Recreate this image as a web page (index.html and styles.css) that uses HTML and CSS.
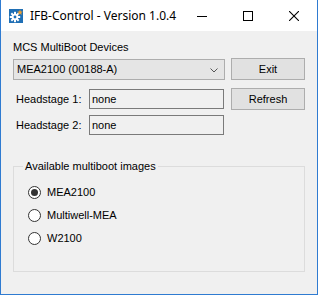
FILE: index.html
```html
<!DOCTYPE html>
<html>
<head>
<meta charset="utf-8">
<link rel="stylesheet" href="styles.css">
</head>
<body>
<div class="window">
  <div class="titlebar">
    <svg class="appicon" width="14" height="14" viewBox="0 0 14 14">
      <rect width="14" height="14" fill="#1f6fb5"/>
      <g fill="#ffffff">
        <circle cx="6" cy="8" r="3.3"/>
        <rect x="5" y="2.8" width="2" height="10.4"/>
        <rect x="0.8" y="7" width="10.4" height="2"/>
        <rect x="5" y="2.8" width="2" height="10.4" transform="rotate(45 6 8)"/>
        <rect x="5" y="2.8" width="2" height="10.4" transform="rotate(-45 6 8)"/>
      </g>
      <circle cx="6" cy="8" r="1.4" fill="#1f6fb5"/>
      <polygon points="11,0.5 11.8,2.6 13.8,2.6 12.2,3.9 12.8,6 11,4.7 9.2,6 9.8,3.9 8.2,2.6 10.2,2.6" fill="#f0a030"/>
    </svg>
    <span class="title">IFB-Control - Version 1.0.4</span>
    <div class="controls">
      <span class="ctl"><svg width="10" height="10" viewBox="0 0 10 10"><rect x="0" y="5" width="10" height="1" fill="#000"/></svg></span>
      <span class="ctl"><svg width="10" height="10" viewBox="0 0 10 10"><rect x="0.5" y="0.5" width="9" height="9" fill="none" stroke="#000" stroke-width="1"/></svg></span>
      <span class="ctl"><svg width="10" height="10" viewBox="0 0 10 10"><path d="M0 0 L10 10 M10 0 L0 10" stroke="#000" stroke-width="1.1"/></svg></span>
    </div>
  </div>
  <div class="client">
    <div class="toplabel">MCS MultiBoot Devices</div>
    <div class="row row1">
      <div class="combo">
        <span class="combo-text">MEA2100 (00188-A)</span>
        <svg class="chev" width="8" height="5" viewBox="0 0 8 5"><path d="M0.5 0.5 L4 4 L7.5 0.5" fill="none" stroke="#555" stroke-width="1"/></svg>
      </div>
      <div class="btn">Exit</div>
    </div>
    <div class="row row2">
      <span class="lbl">Headstage 1:</span>
      <div class="tbox">none</div>
      <div class="btn">Refresh</div>
    </div>
    <div class="row row3">
      <span class="lbl">Headstage 2:</span>
      <div class="tbox">none</div>
    </div>
    <fieldset class="group">
      <legend>Available multiboot images</legend>
      <div class="radio"><span class="circle checked"></span><span class="rtext">MEA2100</span></div>
      <div class="radio"><span class="circle"></span><span class="rtext">Multiwell-MEA</span></div>
      <div class="radio"><span class="circle"></span><span class="rtext">W2100</span></div>
    </fieldset>
  </div>
</div>
</body>
</html>
```
FILE: styles.css
```css
html, body {
  margin: 0;
  padding: 0;
  background: #ffffff;
}
.window {
  width: 318px;
  height: 295px;
  box-sizing: border-box;
  border-left: 1px solid #2f7bd1;
  border-right: 1px solid #2f7bd1;
  border-bottom: 1px solid #2f7bd1;
  background: #f0f0f0;
  display: flex;
  flex-direction: column;
}
.titlebar {
  height: 31px;
  background: #ffffff;
  display: flex;
  align-items: center;
  flex-shrink: 0;
}
.appicon {
  margin-left: 8px;
  margin-top: 1px;
  flex-shrink: 0;
}
.title {
  margin-left: 7px;
  font-family: "Noto Sans", "Open Sans", sans-serif;
  font-size: 12px;
  color: #000;
  white-space: nowrap;
}
.controls {
  margin-left: auto;
  display: flex;
  height: 31px;
}
.ctl {
  width: 46px;
  display: flex;
  align-items: center;
  justify-content: center;
}
.client {
  padding: 10px 0 0 12px;
  font-family: "Liberation Sans", Arial, sans-serif;
  font-size: 11px;
  color: #000;
}
.toplabel {
  height: 13px;
  line-height: 13px;
  margin-bottom: 4px;
}
.row {
  display: flex;
  align-items: flex-start;
}
.combo {
  width: 212px;
  height: 21px;
  box-sizing: border-box;
  margin-top: 1px;
  background: #e5e5e5;
  border: 1px solid #adadad;
  display: flex;
  align-items: center;
  padding-left: 3px;
}
.combo-text {
  flex: 1;
  line-height: 13px;
}
.chev {
  margin-right: 6px;
  margin-top: 1px;
}
.btn {
  width: 74px;
  height: 22px;
  box-sizing: border-box;
  background: #e1e1e1;
  border: 1px solid #adadad;
  display: flex;
  align-items: center;
  justify-content: center;
  line-height: 13px;
}
.row1 .btn {
  margin-left: 6px;
}
.row2 {
  margin-top: 8px;
}
.row2 .btn {
  margin-left: 7px;
}
.lbl {
  width: 76px;
  padding-left: 3px;
  box-sizing: border-box;
  line-height: 13px;
  margin-top: 5px;
  white-space: nowrap;
}
.tbox {
  width: 135px;
  height: 20px;
  box-sizing: border-box;
  margin-top: 1px;
  border: 1px solid #7a7a7a;
  background: #f0f0f0;
  padding-left: 2px;
  line-height: 18px;
}
.row3 {
  margin-top: 5px;
}
.row3 .tbox {
  margin-top: 0;
}
.row3 .lbl {
  margin-top: 4px;
}
.group {
  width: 292px;
  height: 112px;
  box-sizing: border-box;
  margin: 25px 0 0 0;
  padding: 8px 0 0 0;
  border: 1px solid #dcdcdc;
  min-width: 0;
}
.group legend {
  margin-left: 9px;
  padding: 0 2px;
  line-height: 13px;
}
.radio {
  display: flex;
  align-items: center;
  height: 23px;
  margin-left: 14px;
}
.circle {
  width: 13px;
  height: 13px;
  box-sizing: border-box;
  border: 1px solid #333333;
  border-radius: 50%;
  background: #ffffff;
  display: flex;
  align-items: center;
  justify-content: center;
  flex-shrink: 0;
}
.circle.checked::after {
  content: "";
  width: 7px;
  height: 7px;
  border-radius: 50%;
  background: #333333;
}
.rtext {
  margin-left: 6px;
  line-height: 13px;
}
```
